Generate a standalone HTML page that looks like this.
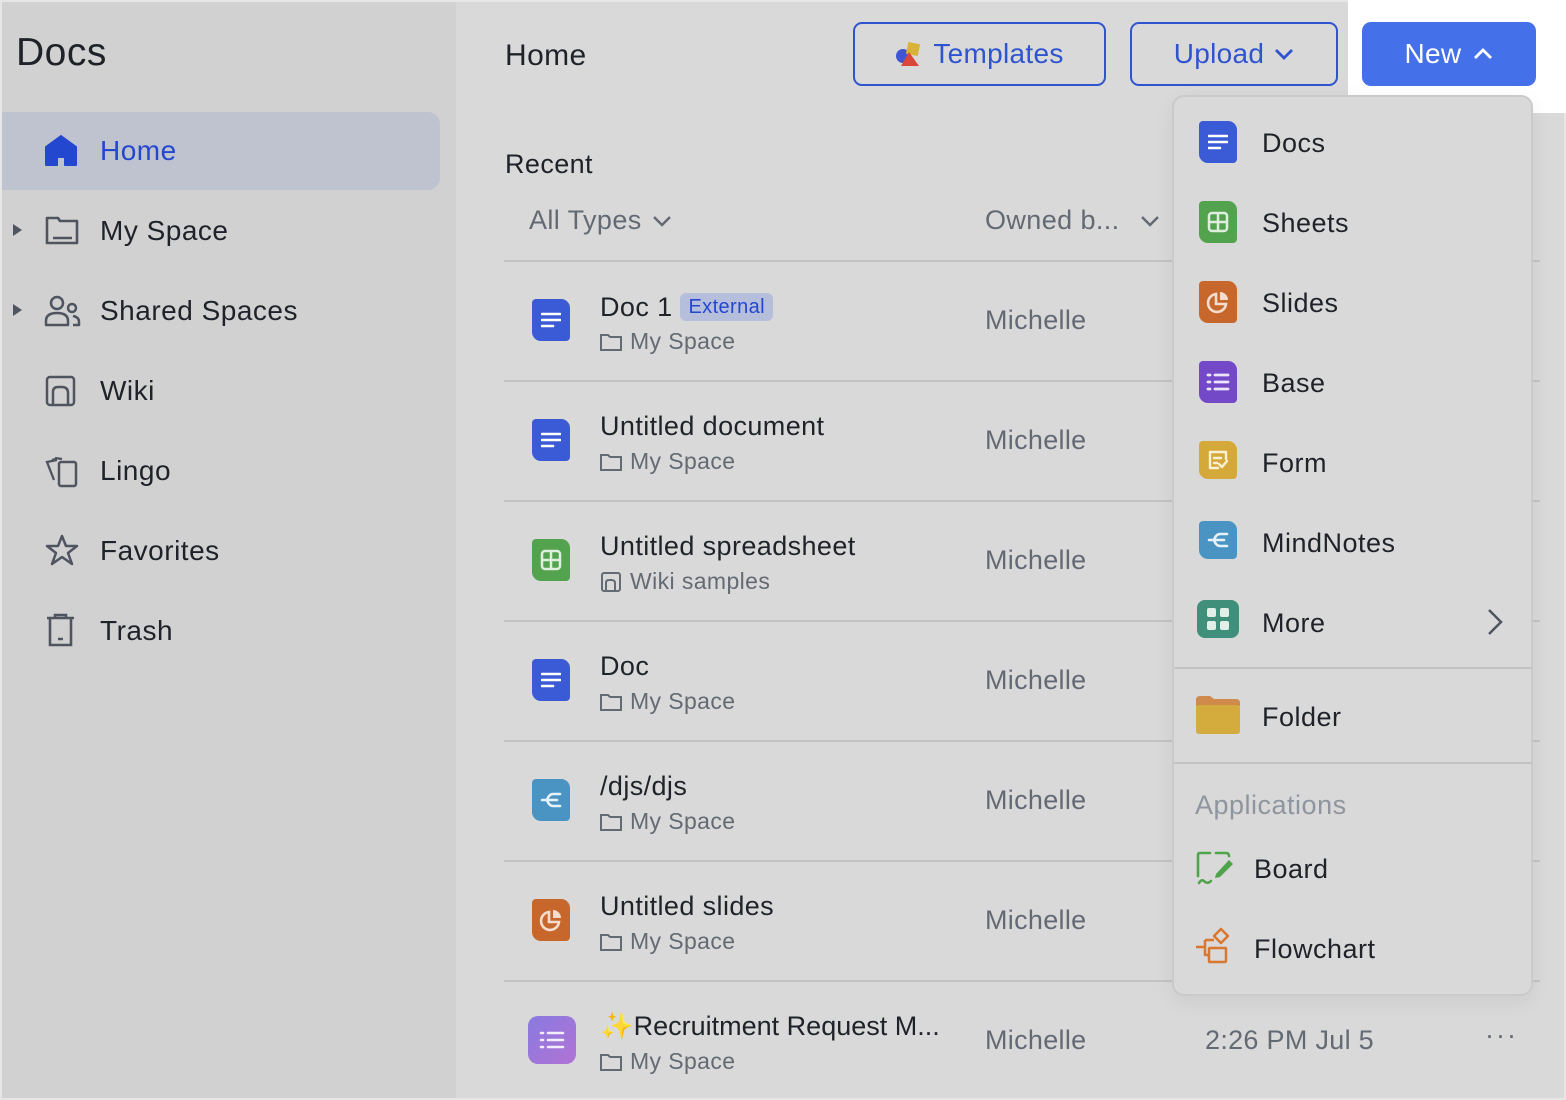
<!DOCTYPE html>
<html><head><meta charset="utf-8"><style>
*{margin:0;padding:0;box-sizing:border-box}
body{width:1566px;height:1100px;overflow:hidden;background:#e6e6e6;font-family:"Liberation Sans",sans-serif;position:relative}
.a{position:absolute}
#side{left:2px;top:2px;width:454px;height:1096px;background:#d1d1d1}
#main{left:456px;top:2px;width:1108px;height:1096px;background:#d9d9d9}
.nav{position:absolute;left:100px;font-size:28px;color:#1f2329;line-height:1;letter-spacing:.5px}
.ni{position:absolute;left:44px}
.btn{position:absolute;border:2px solid #2f54d0;border-radius:9px;color:#2f54d0;font-size:28px;display:flex;align-items:center;justify-content:center;gap:10px;letter-spacing:.3px}
.sep{position:absolute;left:504px;width:1036px;height:2px;background:#c3c3c3}
.ic{position:absolute;left:532px;width:38px;height:42px;border-radius:4px 9px 4px 9px;display:flex;align-items:center;justify-content:center}
.t{position:absolute;left:600px;font-size:27px;color:#1f2329;line-height:1;letter-spacing:.4px}
.s{position:absolute;left:600px;font-size:23px;color:#646a73;line-height:1;display:flex;align-items:center;gap:8px;letter-spacing:.4px}
.own{position:absolute;left:985px;font-size:27px;color:#646a73;line-height:1;letter-spacing:.3px}
#dd{left:1172px;top:95px;width:361px;height:901px;background:#d9d9d9;border:2px solid #cacaca;border-radius:12px;box-shadow:0 6px 20px rgba(0,0,0,.06)}
.mi{position:absolute;left:1262px;font-size:27px;color:#1f2329;line-height:1;letter-spacing:.5px}
.mic{position:absolute;left:1199px;width:38px;height:42px;border-radius:4px 9px 4px 9px;display:flex;align-items:center;justify-content:center}
</style></head><body>
<div id="side" class="a"></div>
<div id="main" class="a"></div>
<div class="a" style="left:16px;top:31px;font-size:39px;color:#1f2329;letter-spacing:.5px">Docs</div>
<div class="a" style="left:2px;top:112px;width:438px;height:78px;background:#bec3cf;border-radius:0 12px 12px 0"></div>
<svg class="ni" style="top:135px" width="34" height="32" viewBox="0 0 34 32"><path d="M17 1 L32 12 V30 H21 V22 H13 V30 H2 V12 Z" fill="#2447d0" stroke="#2447d0" stroke-width="2" stroke-linejoin="round"/></svg>
<div class="nav" style="top:137px;color:#2447d0">Home</div>
<svg class="a" style="left:12px;top:223px" width="12" height="14"><path d="M1 1 L10 7 L1 13Z" fill="#4e5460"/></svg>
<svg class="ni" style="top:215px" width="36" height="30"><path d="M3 3 H14 L16 6 H33 V28 H3 Z M9 23 H28" fill="none" stroke="#4e5460" stroke-width="2.6" stroke-linejoin="round"/></svg>
<div class="nav" style="top:217px">My Space</div>
<svg class="a" style="left:12px;top:303px" width="12" height="14"><path d="M1 1 L10 7 L1 13Z" fill="#4e5460"/></svg>
<svg class="ni" style="top:295px" width="38" height="32"><circle cx="13" cy="8" r="6" fill="none" stroke="#4e5460" stroke-width="2.5"/><circle cx="28" cy="13" r="4" fill="none" stroke="#4e5460" stroke-width="2.5"/><path d="M2 30 V26 Q2 18 13 18 Q24 18 24 26 V30 Z M29 30 H35 V27 Q35 22 29 21" fill="none" stroke="#4e5460" stroke-width="2.5" stroke-linejoin="round"/></svg>
<div class="nav" style="top:297px">Shared Spaces</div>
<svg class="ni" style="top:374px" width="34" height="34"><rect x="3" y="3" width="27" height="28" rx="3" fill="none" stroke="#4e5460" stroke-width="2.5"/><path d="M9 31 V18 Q9 13 14 13 H18 Q24 13 24 19 V31" fill="none" stroke="#4e5460" stroke-width="2.5"/></svg>
<div class="nav" style="top:377px">Wiki</div>
<svg class="ni" style="top:454px" width="36" height="34"><rect x="15" y="8" width="17" height="24" rx="2" fill="none" stroke="#4e5460" stroke-width="2.5"/><path d="M13 6 L3 8 L10 26 M12 5 L8 6 M18 5 L11 4" fill="none" stroke="#4e5460" stroke-width="2.3"/></svg>
<div class="nav" style="top:457px">Lingo</div>
<svg class="ni" style="top:533px" width="36" height="34"><path d="M18 3 L22 13 L33 13 L24 20 L28 31 L18 24 L8 31 L12 20 L3 13 L14 13 Z" fill="none" stroke="#4e5460" stroke-width="2.5" stroke-linejoin="round"/></svg>
<div class="nav" style="top:537px">Favorites</div>
<svg class="ni" style="top:613px" width="34" height="34"><path d="M3 5 H30 M11 5 V2 H22 V5 M6 5 V32 H27 V5 M14 26 H19" fill="none" stroke="#4e5460" stroke-width="2.6"/></svg>
<div class="nav" style="top:617px">Trash</div>

<div class="a" style="left:505px;top:39px;font-size:30px;color:#1f2329;letter-spacing:.4px">Home</div>
<div class="btn" style="left:853px;top:22px;width:253px;height:64px"><svg width="28" height="26"><circle cx="8" cy="15" r="7" fill="#3f55d4"/><rect x="12" y="2" width="12" height="12" fill="#d9b23a" transform="rotate(12 18 8)"/><path d="M14 11 L24 25 H6Z" fill="#d9473b"/></svg>Templates</div>
<div class="btn" style="left:1130px;top:22px;width:208px;height:64px">Upload <svg width="20" height="14"><path d="M2 3 L10 11 L18 3" fill="none" stroke="#2f54d0" stroke-width="2.8"/></svg></div>
<div class="a" style="left:1348px;top:0;width:218px;height:113px;background:#fff;border-radius:0 0 0 10px"></div>
<div class="a" style="left:1362px;top:22px;width:174px;height:64px;background:#4470ea;border-radius:9px;color:#fff;font-size:28px;display:flex;align-items:center;justify-content:center;gap:12px;letter-spacing:.3px">New <svg width="20" height="14"><path d="M2 11 L10 3 L18 11" fill="none" stroke="#fff" stroke-width="2.8"/></svg></div>

<div class="a" style="left:505px;top:149px;font-size:27px;color:#1f2329;letter-spacing:.4px">Recent</div>
<div class="a" style="left:529px;top:205px;font-size:27px;color:#646a73;display:flex;align-items:center;gap:10px;letter-spacing:.4px">All Types <svg width="20" height="14"><path d="M2 3 L10 11 L18 3" fill="none" stroke="#646a73" stroke-width="2.5"/></svg></div>
<div class="a" style="left:985px;top:205px;font-size:27px;color:#646a73;display:flex;align-items:center;gap:20px;letter-spacing:.4px">Owned b... <svg width="20" height="14"><path d="M2 3 L10 11 L18 3" fill="none" stroke="#646a73" stroke-width="2.5"/></svg></div>

<div class="sep" style="top:260px"></div><div class="sep" style="top:380px"></div><div class="sep" style="top:500px"></div><div class="sep" style="top:620px"></div><div class="sep" style="top:740px"></div><div class="sep" style="top:860px"></div><div class="sep" style="top:980px"></div>

<div class="ic" style="top:299px;background:#3a5bd5"><svg width="20" height="16"><path d="M1 2 H19 M1 8 H19 M1 14 H12" stroke="#fff" stroke-width="2.6" stroke-linecap="round"/></svg></div>
<div class="t" style="top:293px">Doc 1 <span style="display:inline-block;font-size:20px;color:#2447d0;background:#b5bedb;border-radius:6px;padding:4px 8px;vertical-align:3px">External</span></div>
<div class="s" style="top:330px"><svg width="22" height="18"><path d="M1 2 H8 L10 4 H21 V17 H1Z" fill="none" stroke="#646a73" stroke-width="2"/></svg>My Space</div>
<div class="own" style="top:307px">Michelle</div>

<div class="ic" style="top:419px;background:#3a5bd5"><svg width="20" height="16"><path d="M1 2 H19 M1 8 H19 M1 14 H12" stroke="#fff" stroke-width="2.6" stroke-linecap="round"/></svg></div>
<div class="t" style="top:413px">Untitled document</div>
<div class="s" style="top:450px"><svg width="22" height="18"><path d="M1 2 H8 L10 4 H21 V17 H1Z" fill="none" stroke="#646a73" stroke-width="2"/></svg>My Space</div>
<div class="own" style="top:427px">Michelle</div>

<div class="ic" style="top:539px;background:#53a24e"><svg width="22" height="22"><rect x="2" y="2" width="18" height="18" rx="3" fill="none" stroke="#dfeedd" stroke-width="2.5"/><path d="M11 2 V20 M2 11 H20" stroke="#dfeedd" stroke-width="2.5"/></svg></div>
<div class="t" style="top:533px">Untitled spreadsheet</div>
<div class="s" style="top:570px"><svg width="22" height="22"><rect x="2" y="2" width="18" height="18" rx="2" fill="none" stroke="#646a73" stroke-width="2"/><path d="M6 20 V12 Q6 9 9 9 H11 Q15 9 15 12 V20" fill="none" stroke="#646a73" stroke-width="2"/></svg>Wiki samples</div>
<div class="own" style="top:547px">Michelle</div>

<div class="ic" style="top:659px;background:#3a5bd5"><svg width="20" height="16"><path d="M1 2 H19 M1 8 H19 M1 14 H12" stroke="#fff" stroke-width="2.6" stroke-linecap="round"/></svg></div>
<div class="t" style="top:653px">Doc</div>
<div class="s" style="top:690px"><svg width="22" height="18"><path d="M1 2 H8 L10 4 H21 V17 H1Z" fill="none" stroke="#646a73" stroke-width="2"/></svg>My Space</div>
<div class="own" style="top:667px">Michelle</div>

<div class="ic" style="top:779px;background:#4a94c4"><svg width="24" height="20"><path d="M21 4 H14 Q10 4 8 10 Q10 16 14 16 H21 M3 10 H18" fill="none" stroke="#e6f1f8" stroke-width="2.6" stroke-linecap="round"/></svg></div>
<div class="t" style="top:773px">/djs/djs</div>
<div class="s" style="top:810px"><svg width="22" height="18"><path d="M1 2 H8 L10 4 H21 V17 H1Z" fill="none" stroke="#646a73" stroke-width="2"/></svg>My Space</div>
<div class="own" style="top:787px">Michelle</div>

<div class="ic" style="top:899px;background:#c7672b"><svg width="24" height="24"><path d="M10 4 A9 9 0 1 0 20 14 H10 Z" fill="none" stroke="#f4ddcc" stroke-width="2.6"/><path d="M14 2 A8 8 0 0 1 22 10 H14Z" fill="#f4ddcc"/></svg></div>
<div class="t" style="top:893px">Untitled slides</div>
<div class="s" style="top:930px"><svg width="22" height="18"><path d="M1 2 H8 L10 4 H21 V17 H1Z" fill="none" stroke="#646a73" stroke-width="2"/></svg>My Space</div>
<div class="own" style="top:907px">Michelle</div>

<div class="ic" style="top:1016px;left:528px;width:48px;height:48px;border-radius:10px;background:linear-gradient(135deg,#8a7ae0,#b073d4)"><svg width="26" height="20"><path d="M2 3 H4 M9 3 H24 M2 10 H4 M9 10 H24 M2 17 H4 M9 17 H24" stroke="#f3edfb" stroke-width="2.6" stroke-linecap="round"/></svg></div>
<div class="t" style="top:1013px;letter-spacing:0"><span style="color:#e0b030">✨</span>Recruitment Request M...</div>
<div class="s" style="top:1050px"><svg width="22" height="18"><path d="M1 2 H8 L10 4 H21 V17 H1Z" fill="none" stroke="#646a73" stroke-width="2"/></svg>My Space</div>
<div class="own" style="top:1027px">Michelle</div>
<div class="own" style="left:1205px;top:1027px">2:26 PM Jul 5</div>
<div class="own" style="left:1485px;top:1022px;letter-spacing:2px">···</div>

<div id="dd" class="a"></div>
<div class="mic" style="top:121px;background:#3a5bd5"><svg width="20" height="16"><path d="M1 2 H19 M1 8 H19 M1 14 H12" stroke="#fff" stroke-width="2.6" stroke-linecap="round"/></svg></div>
<div class="mi" style="top:130px">Docs</div>
<div class="mic" style="top:201px;background:#53a24e"><svg width="22" height="22"><rect x="2" y="2" width="18" height="18" rx="3" fill="none" stroke="#dfeedd" stroke-width="2.5"/><path d="M11 2 V20 M2 11 H20" stroke="#dfeedd" stroke-width="2.5"/></svg></div>
<div class="mi" style="top:210px">Sheets</div>
<div class="mic" style="top:281px;background:#c7672b"><svg width="24" height="24"><path d="M10 4 A9 9 0 1 0 20 14 H10 Z" fill="none" stroke="#f4ddcc" stroke-width="2.6"/><path d="M14 2 A8 8 0 0 1 22 10 H14Z" fill="#f4ddcc"/></svg></div>
<div class="mi" style="top:290px">Slides</div>
<div class="mic" style="top:361px;background:#7449c8"><svg width="24" height="20"><path d="M2 3 H4 M9 3 H22 M2 10 H4 M9 10 H22 M2 17 H4 M9 17 H22" stroke="#ece4fa" stroke-width="2.8" stroke-linecap="round"/></svg></div>
<div class="mi" style="top:370px">Base</div>
<div class="mic" style="top:441px;height:38px;background:#d4a93a"><svg width="24" height="22"><path d="M12 19 H4 V3 H20 V10 M8 9 H15 M8 14 H11 M13 15 L16 18 L21 12" fill="none" stroke="#fbf0d3" stroke-width="2.4" stroke-linecap="round" stroke-linejoin="round"/></svg></div>
<div class="mi" style="top:450px">Form</div>
<div class="mic" style="top:521px;height:38px;background:#4a94c4"><svg width="24" height="20"><path d="M21 4 H14 Q10 4 8 10 Q10 16 14 16 H21 M3 10 H18" fill="none" stroke="#e6f1f8" stroke-width="2.6" stroke-linecap="round"/></svg></div>
<div class="mi" style="top:530px">MindNotes</div>
<div class="mic" style="top:600px;left:1197px;width:42px;height:38px;border-radius:8px;background:#3f8f7b"><svg width="24" height="24"><rect x="1" y="1" width="9" height="9" rx="2" fill="#e2efe9"/><rect x="14" y="1" width="9" height="9" rx="2" fill="#e2efe9"/><rect x="1" y="14" width="9" height="9" rx="2" fill="#e2efe9"/><rect x="14" y="14" width="9" height="9" rx="2" fill="#e2efe9"/></svg></div>
<div class="mi" style="top:610px">More</div>
<svg class="a" style="left:1486px;top:607px" width="18" height="30"><path d="M3 3 L15 15 L3 27" fill="none" stroke="#4e5460" stroke-width="2.5"/></svg>
<div class="a" style="left:1174px;top:667px;width:358px;height:2px;background:#c3c3c3"></div>
<svg class="a" style="left:1196px;top:696px" width="44" height="38"><path d="M0 4 Q0 0 4 0 H14 L18 3 H40 Q44 3 44 7 V10 H0Z" fill="#cf8a4c"/><rect x="0" y="9" width="44" height="29" rx="3" fill="#d4ab3d"/></svg>
<div class="mi" style="top:704px">Folder</div>
<div class="a" style="left:1174px;top:762px;width:358px;height:2px;background:#c3c3c3"></div>
<div class="a" style="left:1195px;top:790px;font-size:27px;color:#8f959e;letter-spacing:.5px">Applications</div>
<svg class="a" style="left:1196px;top:850px" width="38" height="36"><path d="M14 3 H4 Q2 3 2 5 V26 M20 3 H30 Q33 3 33 6" fill="none" stroke="#4fa34b" stroke-width="2.6" stroke-linecap="round"/><path d="M20 24 L33 10 L37 14 L24 27 L19 28Z" fill="#4fa34b"/><path d="M3 33 Q6 28 9 32 Q12 34 15 31" fill="none" stroke="#4fa34b" stroke-width="2.5" stroke-linecap="round"/></svg>
<div class="mi" style="left:1254px;top:856px">Board</div>
<svg class="a" style="left:1195px;top:927px" width="38" height="40"><path d="M26 2 L33 9 L26 16 L19 9Z M1 20 H10 M10 13 H19 M10 13 V28 H14 M14 22 Q14 21 15 21 H30 Q31 21 31 22 V33 Q31 35 30 35 H15 Q14 35 14 34Z" fill="none" stroke="#d9772f" stroke-width="2.5" stroke-linejoin="round"/></svg>
<div class="mi" style="left:1254px;top:936px">Flowchart</div>
</body></html>
